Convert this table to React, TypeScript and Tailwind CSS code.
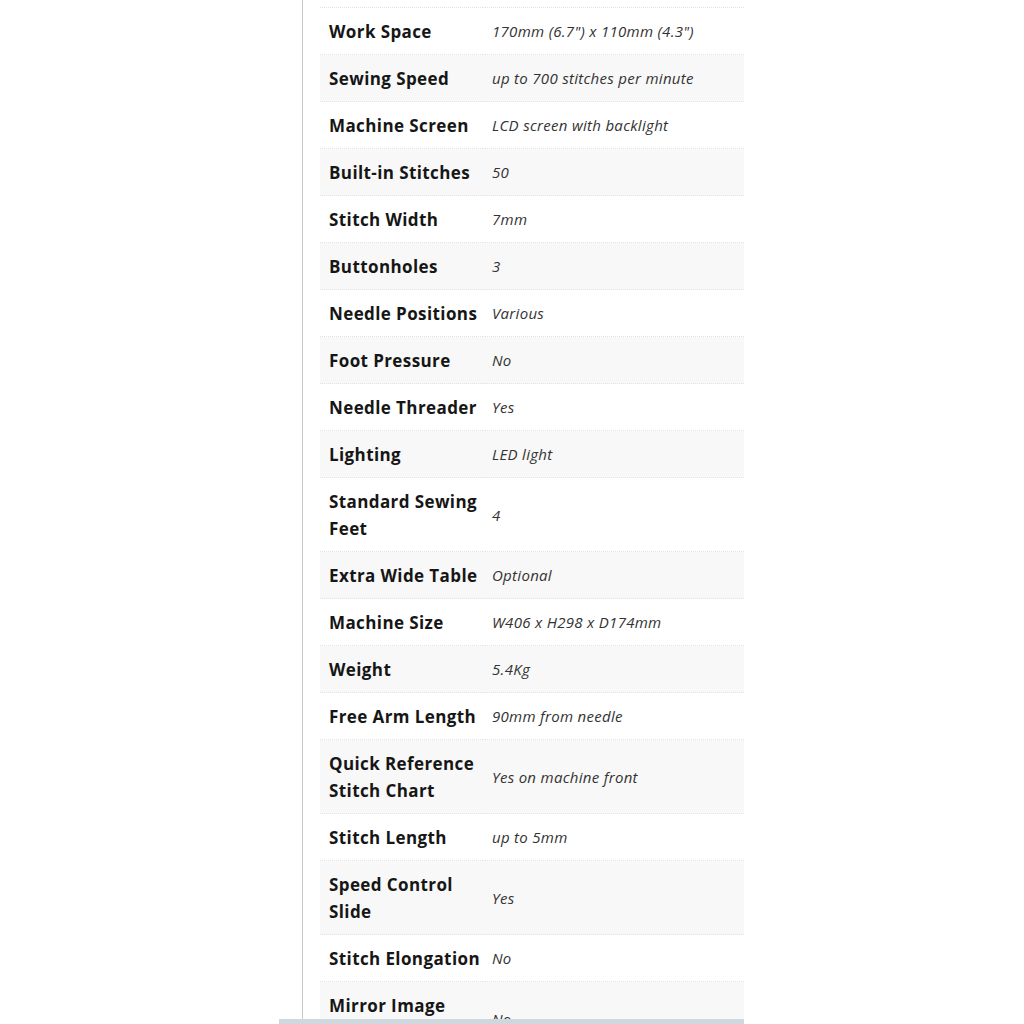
import React from "react";

const rows: { label: React.ReactNode; value: string }[] = [
  { label: "Work Space", value: "170mm (6.7\") x 110mm (4.3\")" },
  { label: "Sewing Speed", value: "up to 700 stitches per minute" },
  { label: "Machine Screen", value: "LCD screen with backlight" },
  { label: "Built-in Stitches", value: "50" },
  { label: "Stitch Width", value: "7mm" },
  { label: "Buttonholes", value: "3" },
  { label: "Needle Positions", value: "Various" },
  { label: "Foot Pressure", value: "No" },
  { label: "Needle Threader", value: "Yes" },
  { label: "Lighting", value: "LED light" },
  { label: <>Standard Sewing<br />Feet</>, value: "4" },
  { label: "Extra Wide Table", value: "Optional" },
  { label: "Machine Size", value: "W406 x H298 x D174mm" },
  { label: "Weight", value: "5.4Kg" },
  { label: "Free Arm Length", value: "90mm from needle" },
  { label: <>Quick Reference<br />Stitch Chart</>, value: "Yes on machine front" },
  { label: "Stitch Length", value: "up to 5mm" },
  { label: <>Speed Control<br />Slide</>, value: "Yes" },
  { label: "Stitch Elongation", value: "No" },
  { label: <>Mirror Image<br />Function</>, value: "No" },
];

export default function App() {
  return (
    <div
      className="relative h-[1024px] w-[1024px] overflow-hidden bg-white"
      style={{ fontFamily: "'Open Sans', 'Noto Sans', sans-serif" }}
    >
      <div className="flex h-full">
        <div className="w-[303px] shrink-0 border-r border-[#c9c9c9] bg-white" />
        <div className="pl-[17px] pt-[7px]">
          <table className="w-[424px] table-fixed border-collapse">
            <colgroup>
              <col className="w-[163px]" />
              <col />
            </colgroup>
            <tbody>
              {rows.map((r, i) => (
                <tr
                  key={i}
                  className={`border-t border-dotted border-[#e3e3e3] ${i % 2 === 1 ? "bg-[#f8f8f8]" : "bg-white"}`}
                >
                  <td className="whitespace-nowrap pl-[9px] pr-0 pt-[10px] pb-[9px] align-middle text-[17px] font-bold leading-[27px] tracking-[0.4px] text-[#161616]">
                    {r.label}
                  </td>
                  <td className="whitespace-nowrap pl-[9px] pr-[9px] pt-[10px] pb-[9px] align-middle text-[15px] italic leading-[27px] tracking-[0.3px] text-[#333333]">
                    {r.value}
                  </td>
                </tr>
              ))}
            </tbody>
          </table>
        </div>
      </div>
      <div className="absolute bottom-0 left-[279px] h-[5px] w-[465px] bg-[#cfd8dc]" />
    </div>
  );
}
